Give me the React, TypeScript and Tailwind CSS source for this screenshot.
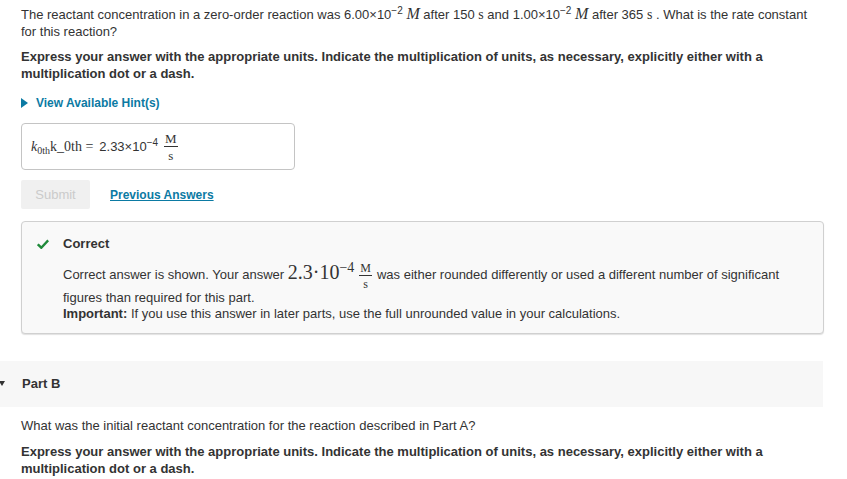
import React from "react";

const serif = { fontFamily: '"Liberation Serif", "DejaVu Serif", serif' };

function Sup({ children, size = "text-[10px]" }: { children: React.ReactNode; size?: string }) {
  return <span className={`relative -top-[0.5em] leading-none ${size}`}>{children}</span>;
}

function Frac({ top, bottom, size = "text-[12px]" }: { top: string; bottom: string; size?: string }) {
  return (
    <span className={`inline-flex flex-col items-center align-middle leading-none ${size}`} style={serif}>
      <span className="border-b border-[#333] px-[1px] pb-[1px]">{top}</span>
      <span className="pt-[2px]">{bottom}</span>
    </span>
  );
}

function Instructions() {
  return (
    <p className="font-bold leading-[17px]">
      Express your answer with the appropriate units. Indicate the multiplication of units, as necessary, explicitly either with a
      multiplication dot or a dash.
    </p>
  );
}

export default function App() {
  return (
    <div
      className="w-[847px] h-[479px] overflow-hidden bg-white text-[13px] text-[#333]"
      style={{ fontFamily: '"Liberation Sans", Arial, sans-serif' }}
    >
      <div className="px-[21px] pt-[6px]">
        <p className="leading-[17px] w-[800px]">
          The reactant concentration in a zero-order reaction was 6.00×10<Sup>−2</Sup>{" "}
          <span className="italic text-[16px] leading-none" style={serif}>M</span> after 150{" "}
          <span className="text-[14px] leading-none" style={serif}>s</span> and 1.00×10<Sup>−2</Sup>{" "}
          <span className="italic text-[16px] leading-none" style={serif}>M</span> after 365{" "}
          <span className="text-[14px] leading-none" style={serif}>s</span> . What is the rate constant for this reaction?
        </p>

        <div className="mt-[8px]">
          <Instructions />
        </div>

        <div className="mt-[12px] flex items-center gap-[8px] font-bold text-[#0b7aa3] text-[12px]">
          <svg width="7" height="10" viewBox="0 0 7 10">
            <path d="M0 0 L7 5 L0 10 Z" fill="#0b7aa3" />
          </svg>
          <span>View Available Hint(s)</span>
        </div>

        <div className="mt-[11px] flex h-[47px] w-[274px] items-center rounded-[4px] border border-[#c4c4c4] px-[9px]">
          <span className="text-[14px]" style={serif}>
            <span className="italic">k</span>
            <span className="relative top-[3px] text-[10px] leading-none">0th</span>k_0th =
          </span>
          <span className="ml-[6px]">
            2.33×10<Sup>−4</Sup>
          </span>
          <span className="ml-[6px]">
            <Frac top="M" bottom="s" size="text-[13px]" />
          </span>
        </div>

        <div className="mt-[10px] flex items-center">
          <div className="flex h-[29px] w-[69px] items-center justify-center rounded-[2px] bg-[#f0f0f0] text-[13px] text-[#cbcbcb]">
            Submit
          </div>
          <span className="ml-[20px] text-[12px] font-bold text-[#0b7aa3] underline">Previous Answers</span>
        </div>

        <div className="mt-[12px] w-[803px] rounded-[4px] border border-[#d0d0d0] bg-[#f9f9f9] pb-[11px] pl-[15px] pr-[24px] pt-[12px] shadow-[0_1px_1px_rgba(0,0,0,0.12)]">
          <div className="flex items-center">
            <svg width="12" height="10" viewBox="0 0 12 10">
              <path d="M0.8 5.3 L4.3 8.7 L11.2 1.4" fill="none" stroke="#1f8a3a" strokeWidth="2.4" />
            </svg>
            <span className="ml-[14px] text-[13px] font-bold">Correct</span>
          </div>
          <div className="pl-[26px] pt-[8px] leading-[16px]">
            <p>
              Correct answer is shown. Your answer{" "}
              <span className="text-[20px] leading-none" style={serif}>
                2.3·10<Sup size="text-[14px]">−4</Sup>
              </span>
              <span className="mx-[5px]">
                <Frac top="M" bottom="s" size="text-[12px]" />
              </span>
              was either rounded differently or used a different number of significant figures than required for this part.
            </p>
            <p>
              <span className="font-bold">Important:</span> If you use this answer in later parts, use the full unrounded value in your
              calculations.
            </p>
          </div>
        </div>
      </div>

      <div className="mt-[27px] flex h-[46px] w-[823px] items-center bg-[#f7f7f7]">
        <svg width="6" height="5" viewBox="0 0 6 5" className="ml-[-1px]">
          <path d="M0 0 L6 0 L3 5 Z" fill="#333" />
        </svg>
        <span className="ml-[17px] text-[13px] font-bold">Part B</span>
      </div>

      <div className="px-[21px] pt-[10px]">
        <p className="leading-[17px]">What was the initial reactant concentration for the reaction described in Part A?</p>
        <div className="mt-[9px]">
          <Instructions />
        </div>
      </div>
    </div>
  );
}
